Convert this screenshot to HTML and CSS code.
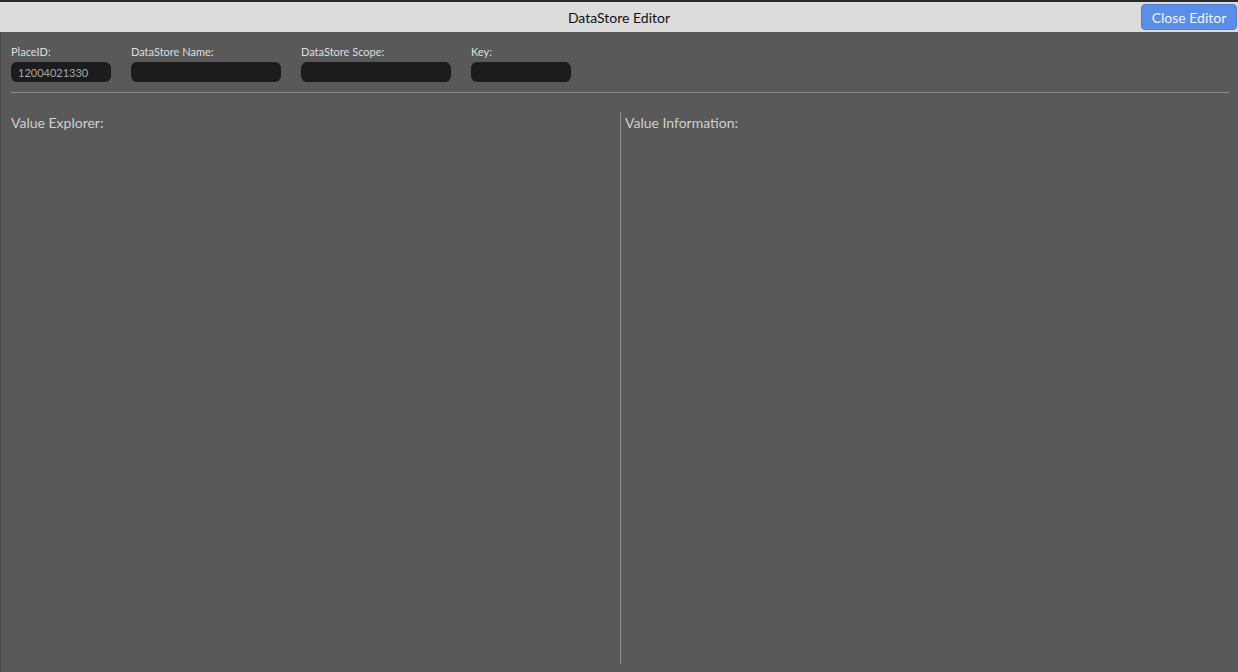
FILE: index.html
```html
<!DOCTYPE html>
<html>
<head>
<meta charset="utf-8">
<link rel="stylesheet" href="styles.css">
</head>
<body>
<div class="app">
  <header class="titlebar">
    <div class="title">DataStore Editor</div>
    <button class="close-btn">Close Editor</button>
  </header>
  <main class="content">
    <section class="fields">
      <div class="field w100">
        <label class="field-label">PlaceID:</label>
        <div class="input"><span class="placeholder">12004021330</span></div>
      </div>
      <div class="field w150">
        <label class="field-label">DataStore Name:</label>
        <div class="input"></div>
      </div>
      <div class="field w150">
        <label class="field-label">DataStore Scope:</label>
        <div class="input"></div>
      </div>
      <div class="field w100">
        <label class="field-label">Key:</label>
        <div class="input"></div>
      </div>
    </section>
    <hr class="divider">
    <section class="panels">
      <div class="panel left">
        <div class="panel-title">Value Explorer:</div>
      </div>
      <div class="vsep"></div>
      <div class="panel right">
        <div class="panel-title">Value Information:</div>
      </div>
    </section>
  </main>
</div>
</body>
</html>
```

FILE: styles.css
```css
* { box-sizing: border-box; }
html, body {
  margin: 0;
  padding: 0;
  height: 100%;
  background: #2b2b2b;
  font-family: "Lato", "Liberation Sans", sans-serif;
}
.app {
  height: 100%;
  padding-top: 2px;
  display: flex;
  flex-direction: column;
}
.titlebar {
  height: 30px;
  flex: none;
  background: #dcdcdc;
  position: relative;
  display: flex;
  align-items: center;
  justify-content: center;
}
.title {
  font-size: 14px;
  color: #111;
}
.close-btn {
  position: absolute;
  right: 1px;
  top: 2px;
  width: 96px;
  height: 26px;
  border: 1px solid #4f7fd2;
  border-radius: 4px;
  background: #5b8ee8;
  color: #f2f4f8;
  font-family: inherit;
  font-size: 14px;
  padding: 0;
}
.content {
  flex: 1;
  background: #595959;
  border-left: 1px solid #4a4a4a;
  padding: 13px 9px 8px 10px;
  display: flex;
  flex-direction: column;
}
.fields {
  display: flex;
  gap: 20px;
}
.field {
  display: flex;
  flex-direction: column;
}
.w100 { width: 100px; }
.w150 { width: 150px; }
.field-label {
  font-size: 11px;
  line-height: 14px;
  color: #dedede;
  height: 17px;
}
.input {
  height: 20px;
  border-radius: 6px;
  background: #1c1c1c;
  display: flex;
  align-items: center;
  padding-left: 7px;
}
.placeholder {
  font-size: 11px;
  color: #a8a8a8;
}
.divider {
  margin: 10px 0 0 0;
  border: 0;
  height: 1px;
  background: #8a8a8a;
}
.panels {
  flex: 1;
  display: flex;
  margin-top: 19px;
}
.panel.left {
  flex: 0 0 609px;
  padding-top: 3px;
}
.panel.right {
  flex: 1;
  padding-top: 3px;
  padding-left: 4px;
}
.panel-title {
  font-size: 14px;
  color: #cfcfcf;
  line-height: 16px;
}
.vsep {
  width: 1px;
  background: #8f8f8f;
  flex: none;
}
```
